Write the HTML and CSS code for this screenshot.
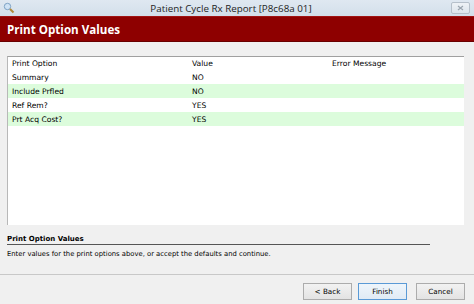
FILE: index.html
```html
<!DOCTYPE html>
<html>
<head>
<meta charset="utf-8">
<link rel="stylesheet" href="styles.css">
</head>
<body>
<div class="window">
  <div class="titlebar">
    <svg class="appicon" width="12" height="12" viewBox="0 0 12 12">
      <circle cx="4.5" cy="4.5" r="3.2" fill="#cfe3f5" stroke="#7da2c4" stroke-width="1"/>
      <line x1="7" y1="7" x2="10.5" y2="10.5" stroke="#b08a3a" stroke-width="2"/>
    </svg>
    <div class="title">Patient Cycle Rx Report [P8c68a 01]</div>
    <div class="close">
      <svg width="7" height="6" viewBox="0 0 7 6"><path d="M1 1 L6 5 M6 1 L1 5" stroke="#9aa4ae" stroke-width="1.2"/></svg>
    </div>
  </div>
  <div class="banner">Print Option Values</div>
  <div class="content">
    <div class="grid">
      <div class="row head">
        <div class="c1">Print Option</div>
        <div class="c2">Value</div>
        <div class="c3">Error Message</div>
      </div>
      <div class="row">
        <div class="c1">Summary</div><div class="c2">NO</div><div class="c3"></div>
      </div>
      <div class="row alt">
        <div class="c1">Include Prfled</div><div class="c2">NO</div><div class="c3"></div>
      </div>
      <div class="row">
        <div class="c1">Ref Rem?</div><div class="c2">YES</div><div class="c3"></div>
      </div>
      <div class="row alt">
        <div class="c1">Prt Acq Cost?</div><div class="c2">YES</div><div class="c3"></div>
      </div>
    </div>
    <div class="help">
      <div class="help-title">Print Option Values</div>
      <div class="help-text">Enter values for the print options above, or accept the defaults and continue.</div>
    </div>
  </div>
  <div class="footer">
    <button class="btn">&lt; Back</button>
    <button class="btn primary">Finish</button>
    <button class="btn cancel">Cancel</button>
  </div>
</div>
</body>
</html>
```
FILE: styles.css
```css
html, body {
  margin: 0;
  padding: 0;
  background: #f0f0f0;
}
.window {
  width: 474px;
  height: 304px;
  display: flex;
  flex-direction: column;
  font-family: "DejaVu Sans", "Noto Sans", sans-serif;
  color: #000;
  overflow: hidden;
}
.titlebar {
  height: 16px;
  display: flex;
  align-items: center;
  background: linear-gradient(#dfe8f1, #d3dfea);
  position: relative;
}
.appicon {
  margin-left: 3px;
}
.title {
  flex: 1;
  text-align: center;
  font-family: "Open Sans", sans-serif;
  font-size: 9.8px;
  color: #1e1e1e;
  padding-right: 4px;
}
.close {
  width: 17px;
  height: 10px;
  margin-right: 4px;
  border: 1px solid #b6c0ca;
  border-radius: 2px;
  background: linear-gradient(#eef2f6, #dde5ec);
  display: flex;
  align-items: center;
  justify-content: center;
}
.banner {
  height: 24px;
  background: #8e0000;
  border-top: 1px solid #a01414;
  border-bottom: 1px solid #6a0000;
  color: #fff;
  font-family: "Open Sans", sans-serif;
  font-weight: 700;
  font-size: 11.6px;
  display: flex;
  align-items: center;
  padding-left: 7px;
}
.content {
  flex: 1;
  padding: 14px 10px 0 7px;
  display: flex;
  flex-direction: column;
}
.grid {
  height: 168px;
  background: #fff;
  border-top: 1px solid #a0a0a0;
  border-left: 1px solid #b8b8b8;
  font-size: 7.6px;
}
.row {
  height: 14px;
  display: flex;
  align-items: center;
}
.row.head {
  height: 13px;
}
.row.alt {
  background: #dcfcdc;
}
.c1 {
  width: 180px;
  padding-left: 4px;
}
.c2 {
  width: 103px;
}
.c3 {
  flex: 1;
  padding-left: 37px;
}
.help {
  padding-top: 10px;
}
.help-title {
  font-family: "DejaVu Sans", sans-serif;
  font-weight: 700;
  font-size: 7px;
  width: 423px;
  border-bottom: 1px solid #555;
  padding-bottom: 1px;
}
.help-text {
  font-size: 6.8px;
  padding-top: 5px;
}
.footer {
  height: 30px;
  border-top: 1px solid #c8c8c8;
  display: flex;
  align-items: flex-start;
  justify-content: flex-end;
  padding: 8px 9px 0 0;
  gap: 6px;
  box-sizing: border-box;
}
.btn {
  width: 49px;
  height: 17px;
  padding: 0;
  font-family: "DejaVu Sans", sans-serif;
  font-size: 7.2px;
  color: #000;
  background: linear-gradient(#f2f2f2, #e3e3e3);
  border: 1px solid #acacac;
  border-radius: 0;
}
.btn.primary {
  border-color: #5a9ad6;
  background: linear-gradient(#eef5fb, #e0ebf5);
}
.btn.cancel {
  margin-left: 3px;
}
```
